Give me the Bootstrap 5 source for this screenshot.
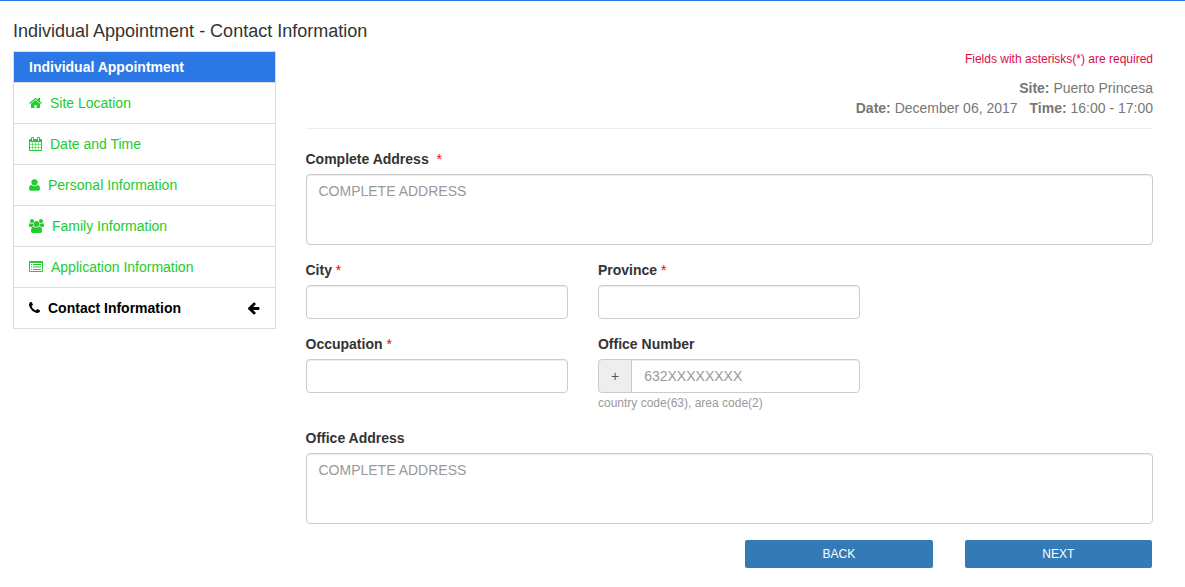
<!DOCTYPE html>
<html lang="en">
<head>
<meta charset="utf-8">
<meta name="viewport" content="width=device-width, initial-scale=1">
<title>Individual Appointment - Contact Information</title>
<link href="https://cdn.jsdelivr.net/npm/bootstrap@5.3.0/dist/css/bootstrap.min.css" rel="stylesheet">
<style>
  body { font-family: "Liberation Sans", Arial, sans-serif; font-size: 14px; line-height: 20px; color: #333; border-top: 1px solid #2b77e5; }
  .page { padding: 20px 32px 16px 13px; }
  .row { --bs-gutter-x: 30px; }
  .page-title { font-size: 18px; line-height: 20px; font-weight: 400; margin-bottom: 10px; }
  .steps { --bs-list-group-border-radius: 0; --bs-list-group-border-color: #ddd; --bs-list-group-item-padding-x: 15px; --bs-list-group-item-padding-y: 10px; --bs-list-group-active-bg: #fff; --bs-list-group-active-color: #000; --bs-list-group-active-border-color: #ddd; }
  .steps .list-group-item { display: flex; align-items: center; gap: 8px; color: #23cb2f; }
  .steps .steps-head { background: #2b77e5; color: #fff; padding-top: 5px; padding-bottom: 5px; }
  .steps .active { color: #000; border-top-width: 0; margin-top: 0; }
  .steps svg { height: 14px; fill: currentColor; flex: none; }
  .required-note { font-size: 12px; line-height: 16px; color: #dc0b46; margin-bottom: 11px; }
  .slot { color: #777; padding-bottom: 10px; border-bottom: 1px solid #eee; margin-bottom: 20px; }
  .field { margin-bottom: 15px; }
  .form-label { font-weight: 700; margin-bottom: 5px; display: block; }
  .req { color: #f00; font-weight: 400; }
  .form-control { font-size: 14px; line-height: 20px; padding: 6px 12px; border: 1px solid #ccc; border-radius: 4px; box-shadow: inset 0 1px 1px rgba(0,0,0,.075); min-height: 34px; }
  .form-control::placeholder { color: #999; }
  textarea.form-control { height: 71px; resize: none; }
  .input-group-text { font-size: 14px; line-height: 20px; padding: 6px 12px; color: #555; background: #eee; border-color: #ccc; border-radius: 4px; }
  .hint { font-size: 12px; line-height: 20px; color: #999; }
  .btn-step { --bs-btn-bg: #337ab7; --bs-btn-color: #fff; --bs-btn-hover-bg: #286090; --bs-btn-hover-color: #fff; --bs-btn-border-color: #fff; --bs-btn-font-size: 12px; --bs-btn-line-height: 18px; --bs-btn-padding-y: 5px; --bs-btn-border-radius: 3px; }
</style>
</head>
<body>
<main class="container-fluid page">
  <h1 class="page-title">Individual Appointment - Contact Information</h1>
  <div class="row">
    <nav class="col-3" aria-label="Appointment steps">
      <div class="list-group steps">
        <div class="list-group-item steps-head fw-bold">Individual Appointment</div>
        <a href="#" class="list-group-item"><svg width="13" viewBox="64 0 1664 1792" aria-hidden="true"><path d="M1472 992v480q0 26-19 45t-45 19h-384v-384h-256v384h-384q-26 0-45-19t-19-45v-480q0-1 .5-3t.5-3l575-474 575 474q1 2 1 6zm223-69l-62 74q-8 9-21 11h-3q-13 0-21-7l-692-577-692 577q-12 8-24 7-13-2-21-11l-62-74q-8-10-7-23.5t11-21.5l719-599q32-26 76-26t76 26l244 204v-195q0-14 9-23t23-9h192q14 0 23 9t9 23v408l219 182q10 8 11 21.5t-7 23.5z"/></svg>Site Location</a>
        <a href="#" class="list-group-item"><svg width="13" viewBox="64 0 1664 1792" aria-hidden="true"><path d="M192 1664h288v-288h-288v288zm352 0h320v-288h-320v288zm-352-352h288v-320h-288v320zm352 0h320v-320h-320v320zm-352-384h288v-288h-288v288zm736 736h320v-288h-320v288zm-384-736h320v-288h-320v288zm768 736h288v-288h-288v288zm-384-352h320v-320h-320v320zm-352-864v-288q0-13-9.500-22.500t-22.500-9.500h-64q-13 0-22.500 9.500t-9.500 22.500v288q0 13 9.500 22.500t22.500 9.500h64q13 0 22.500-9.500t9.500-22.500zm736 864h288v-320h-288v320zm-384-384h320v-288h-320v288zm384 0h288v-288h-288v288zm32-480v-288q0-13-9.500-22.500t-22.500-9.500h-64q-13 0-22.500 9.500t-9.500 22.500v288q0 13 9.500 22.500t22.500 9.500h64q13 0 22.500-9.500t9.500-22.500zm384-64v1280q0 52-38 90t-90 38h-1408q-52 0-90-38t-38-90v-1280q0-52 38-90t90-38h128v-96q0-66 47-113t113-47h64q66 0 113 47t47 113v96h384v-96q0-66 47-113t113-47h64q66 0 113 47t47 113v96h128q52 0 90 38t38 90z"/></svg>Date and Time</a>
        <a href="#" class="list-group-item"><svg width="11" viewBox="0 0 11 14" aria-hidden="true"><circle cx="5.500" cy="4.300" r="3.100"/><path d="M2.600 7Q4 8.200 5.500 8.200T8.400 7Q11 7.200 11 11Q11 12.800 9.400 12.800H1.600Q0 12.800 0 11Q0 7.200 2.600 7z"/></svg>Personal Information</a>
        <a href="#" class="list-group-item"><svg width="15" viewBox="0 0 1920 1792" aria-hidden="true"><path d="M593 896q-162 5-265 128h-134q-82 0-138-40.500t-56-118.500q0-353 124-353 6 0 43.500 21t97.500 42.500 119 21.500q67 0 133-23-5 37-5 66 0 159 81 256zm1071 637q0 120-73 189.500t-194 69.500h-874q-121 0-194-69.500t-73-189.500q0-53 3.500-103.500t14-109 26.500-108.500 43-97.500 62-81 85.500-53.500 111.500-20q10 0 43 21.500t73 48 107 48 135 21.500 135-21.500 107-48 73-48 43-21.500q61 0 111.500 20t85.500 53.500 62 81 43 97.500 26.500 108.500 14 109 3.500 103.500zm-1024-1277q0 106-75 181t-181 75-181-75-75-181 75-181 181-75 181 75 75 181zm704 384q0 159-112.500 271.500t-271.500 112.500-271.500-112.500-112.500-271.500 112.500-271.500 271.500-112.500 271.500 112.500 112.500 271.500zm576 225q0 78-56 118.500t-138 40.500h-134q-103-123-265-128 81-97 81-256 0-29-5-66 66 23 133 23 59 0 119-21.500t97.500-42.500 43.500-21q124 0 124 353zm-128-609q0 106-75 181t-181 75-181-75-75-181 75-181 181-75 181 75 75 181z"/></svg>Family Information</a>
        <a href="#" class="list-group-item"><svg width="14" viewBox="0 0 14 14" aria-hidden="true"><path fill-rule="evenodd" d="M1 1h12q1 0 1 1v9q0 1-1 1H1q-1 0-1-1V2q0-1 1-1zM1 3v8h12V3z"/><path d="M2 4h1v1H2zm2 0h8v1H4zM2 6.500h1v1H2zm2 0h8v1H4zM2 9h1v1H2zm2 0h8v1H4z"/></svg>Application Information</a>
        <a href="#" class="list-group-item active fw-bold" aria-current="step"><svg width="11" viewBox="192 0 1408 1792" aria-hidden="true"><path d="M1600 1240q0 27-10 70.500t-21 68.500q-21 50-122 106-94 51-186 51-27 0-53-3.500t-57.500-12.500-47-14.500-55.500-20.500-49-18q-98-35-175-83-127-79-264-216t-216-264q-48-77-83-175-3-9-18-49t-20.500-55.500-14.500-47-12.500-57.500-3.500-53q0-92 51-186 56-101 106-122 25-11 68.500-21t70.500-10q14 0 21 3 18 6 53 76 11 19 30 54t35 63.500 31 53.500q3 4 17.500 25t21.500 35.500 7 28.500q0 20-28.500 50t-62 55-62 53-28.500 46q0 9 5 22.500t8.500 20.500 14 24 11.500 19q76 137 174 235t235 174q2 1 19 11.500t24 14 20.500 8.500 22.500 5q18 0 46-28.500t53-62 55-62 50-28.500q14 0 28.500 7t35.500 21.500 25 17.500q25 15 53.500 31t63.500 35 54 30q70 35 76 53 3 7 3 21z"/></svg>Contact Information<svg class="ms-auto" width="13" viewBox="64 0 1664 1792" aria-hidden="true"><path d="M1664 896v128q0 53-32.500 90.500t-84.500 37.500h-704l293 294q38 36 38 90t-38 90l-75 76q-37 37-90 37-52 0-91-37l-651-652q-37-37-37-90 0-52 37-91l651-650q38-38 91-38 52 0 90 38l75 74q38 38 38 91t-38 91l-293 293h704q52 0 84.500 37.500t32.500 90.500z"/></svg></a>
      </div>
    </nav>
    <form class="col-9">
      <p class="required-note text-end">Fields with asterisks(*) are required</p>
      <div class="slot text-end">
        <div><strong>Site:</strong> Puerto Princesa</div>
        <div><strong>Date:</strong> December 06, 2017 <strong class="ms-2">Time:</strong> 16:00 - 17:00</div>
      </div>
      <div class="field">
        <label class="form-label" for="address">Complete Address <span class="req ms-1">*</span></label>
        <textarea class="form-control" id="address" placeholder="COMPLETE ADDRESS"></textarea>
      </div>
      <div class="row">
        <div class="col-4 field">
          <label class="form-label" for="city">City <span class="req">*</span></label>
          <input class="form-control" id="city" type="text">
        </div>
        <div class="col-4 field">
          <label class="form-label" for="province">Province <span class="req">*</span></label>
          <input class="form-control" id="province" type="text">
        </div>
      </div>
      <div class="row">
        <div class="col-4 field">
          <label class="form-label" for="occupation">Occupation <span class="req">*</span></label>
          <input class="form-control" id="occupation" type="text">
        </div>
        <div class="col-4 field">
          <label class="form-label" for="office-number">Office Number</label>
          <div class="input-group">
            <span class="input-group-text">+</span>
            <input class="form-control" id="office-number" type="tel" placeholder="632XXXXXXXX" aria-describedby="number-hint">
          </div>
          <div class="hint" id="number-hint">country code(63), area code(2)</div>
        </div>
      </div>
      <div class="field">
        <label class="form-label" for="office-address">Office Address</label>
        <textarea class="form-control" id="office-address" placeholder="COMPLETE ADDRESS"></textarea>
      </div>
      <div class="row justify-content-end">
        <div class="col-3"><button type="button" class="btn btn-step w-100">BACK</button></div>
        <div class="col-3"><button type="submit" class="btn btn-step w-100">NEXT</button></div>
      </div>
    </form>
  </div>
</main>
<script src="https://cdn.jsdelivr.net/npm/bootstrap@5.3.0/dist/js/bootstrap.bundle.min.js"></script>
</body>
</html>
